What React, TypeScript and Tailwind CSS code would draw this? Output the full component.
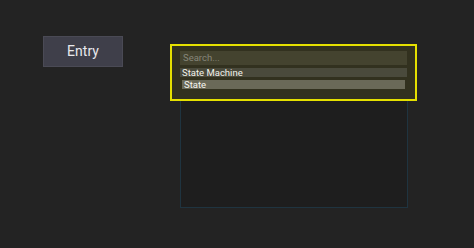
import React from "react";

const App = () => {
  return (
    <div
      className="w-[474px] h-[248px] bg-[#232323] flex items-start overflow-hidden"
      style={{ fontFamily: 'Roboto, "Liberation Sans", sans-serif' }}
    >
      {/* Entry node */}
      <div className="ml-[43px] mt-[36px] w-[80px] h-[31px] bg-[#3f3f4a] border border-[#4a4a55] flex items-center justify-center text-[14px] text-[#e8e8ec]">
        Entry
      </div>

      {/* State panel with add-node popup */}
      <div className="relative ml-[57px] mt-[50px] w-[228px] h-[158px] bg-[#1e1e1e] border border-[#1f3440]">
        <div className="absolute -top-[7px] -left-[11px] w-[247px] h-[57px] border-2 border-[#e5e000] bg-[#32311f] flex flex-col px-[8px] pt-[5px] gap-[3px]">
          <div className="h-[14px] bg-[#44432f] text-[9.5px] leading-[14px] text-[#86867a] px-[3px]">
            Search...
          </div>
          <div className="h-[9px] bg-[#4a4a3c] text-[9.5px] leading-[9px] text-[#f2f2ea] px-[2px]">
            State Machine
          </div>
          <div className="h-[9px] mx-[2px] bg-[#6a6958] text-[9.5px] leading-[9px] text-[#f6f6f0] px-[2px]">
            State
          </div>
        </div>
      </div>
    </div>
  );
};

export default App;
